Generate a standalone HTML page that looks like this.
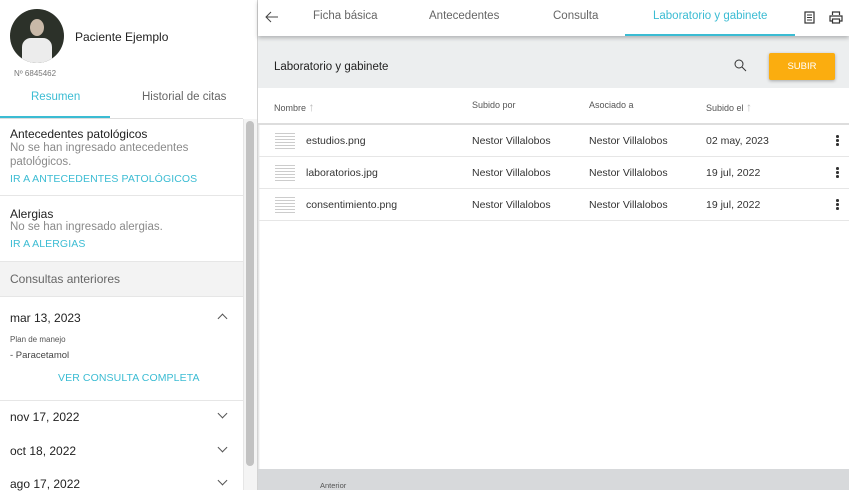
<!DOCTYPE html>
<html><head><meta charset="utf-8"><style>
*{box-sizing:border-box;margin:0;padding:0}
body{width:849px;height:490px;overflow:hidden;font-family:"Liberation Sans",sans-serif;background:#fff;position:relative;color:#333}
.abs{position:absolute}
.left{left:0;top:0;width:243px;height:490px;background:#fff}
.cyan{color:#3bbcd3}
.sec{position:absolute;left:0;width:243px;border-bottom:1px solid #e6e6e6}
.t{font-size:12px;color:#222}
.g{font-size:11.5px;color:#8a8a8a;line-height:14px}
.lk{font-size:10.5px;color:#3bbcd3;letter-spacing:.1px}
.date{position:absolute;left:10px;font-size:12px;color:#222}
.chev{position:absolute;left:219px;width:7px;height:7px;border-right:1px solid #555;border-bottom:1px solid #555}
.th{font-size:9px;color:#555;position:absolute;top:100px}
.row{position:absolute;left:258px;width:591px;height:32px;border-bottom:1px solid #e6e6e6;font-size:10.5px;color:#333}
.row span{position:absolute;top:10px}
.dots{position:absolute;left:578px;top:10px;width:3px}
.dots i{display:block;width:2.5px;height:2.5px;background:#333;border-radius:50%;margin-bottom:1.5px}
.thumb{position:absolute;left:17px;top:6px;width:20px;height:20px;background:repeating-linear-gradient(#fff 0 2px,#ccc 2px 3px)}
</style></head><body>
<div class="abs left">
  <div class="abs" style="left:10px;top:9px;width:54px;height:54px;border-radius:50%;background:#2c3129;overflow:hidden">
    <div class="abs" style="left:20px;top:10px;width:14px;height:17px;border-radius:50%;background:#c9b9a8"></div>
    <div class="abs" style="left:12px;top:29px;width:30px;height:26px;background:#ececec;border-radius:9px 9px 0 0"></div>
  </div>
  <div class="abs" style="left:75px;top:30px;font-size:12px;color:#222">Paciente Ejemplo</div>
  <div class="abs" style="left:14px;top:69px;font-size:8px;color:#777">Nº 6845462</div>
  <div class="abs cyan" style="left:31px;top:91px;font-size:11.5px">Resumen</div>
  <div class="abs" style="left:142px;top:91px;font-size:11.5px;color:#666">Historial de citas</div>
  <div class="abs" style="left:0;top:116px;width:110px;height:2px;background:#3bbcd3"></div>
  <div class="abs" style="left:0;top:118px;width:243px;height:1px;background:#ddd"></div>
  <div class="sec" style="top:119px;height:77px">
    <div class="abs t" style="left:10px;top:8px">Antecedentes patológicos</div>
    <div class="abs g" style="left:10px;top:22px;width:220px">No se han ingresado antecedentes patológicos.</div>
    <div class="abs lk" style="left:10px;top:54px">IR A ANTECEDENTES PATOLÓGICOS</div>
  </div>
  <div class="sec" style="top:196px;height:66px">
    <div class="abs t" style="left:10px;top:11px">Alergias</div>
    <div class="abs g" style="left:10px;top:24px">No se han ingresado alergias.</div>
    <div class="abs lk" style="left:10px;top:42px">IR A ALERGIAS</div>
  </div>
  <div class="sec" style="top:262px;height:35px;background:#f3f3f3">
    <div class="abs" style="left:10px;top:10px;font-size:12px;color:#666">Consultas anteriores</div>
  </div>
  <div class="sec" style="top:297px;height:104px">
    <div class="date" style="top:14px">mar 13, 2023</div>
    <div class="chev" style="top:18px;transform:rotate(-135deg)"></div>
    <div class="abs" style="left:10px;top:38px;font-size:8px;color:#555">Plan de manejo</div>
    <div class="abs" style="left:10px;top:53px;font-size:9.5px;color:#444">- Paracetamol</div>
    <div class="abs lk" style="left:58px;top:75px">VER CONSULTA COMPLETA</div>
  </div>
  <div class="date" style="top:410px">nov 17, 2022</div><div class="chev" style="top:410px;transform:rotate(45deg)"></div>
  <div class="date" style="top:444px">oct 18, 2022</div><div class="chev" style="top:444px;transform:rotate(45deg)"></div>
  <div class="date" style="top:477px">ago 17, 2022</div><div class="chev" style="top:477px;transform:rotate(45deg)"></div>
</div>
<div class="abs" style="left:243px;top:119px;width:15px;height:371px;background:#f4f4f4;border-left:1px solid #e6e6e6"></div>
<div class="abs" style="left:246px;top:121px;width:8px;height:345px;background:#c2c2c2;border-radius:4px"></div>
<div class="abs" style="left:257px;top:0;width:3px;height:490px;background:linear-gradient(90deg,#ccc,#fff0)"></div>
<div class="abs" style="left:258px;top:0;width:591px;height:36px;background:#fff;box-shadow:0 2px 4px rgba(0,0,0,.25);z-index:2">
  <svg class="abs" style="left:7px;top:11px" width="14" height="12" viewBox="0 0 14 12"><path d="M13 6H1M6 1L1 6l5 5" stroke="#444" stroke-width="1" fill="none"/></svg>
  <div class="abs" style="left:55px;top:10px;font-size:11.5px;color:#666">Ficha básica</div>
  <div class="abs" style="left:171px;top:10px;font-size:11.5px;color:#666">Antecedentes</div>
  <div class="abs" style="left:295px;top:10px;font-size:11.5px;color:#666">Consulta</div>
  <div class="abs cyan" style="left:395px;top:10px;font-size:11.5px">Laboratorio y gabinete</div>
  <div class="abs" style="left:367px;top:34px;width:170px;height:2px;background:#3bbcd3"></div>
  <svg class="abs" style="left:546px;top:11px" width="11" height="13" viewBox="0 0 11 13"><rect x="1" y="1" width="9" height="11" fill="none" stroke="#333" stroke-width="1.2"/><path d="M3 4h5M3 6.5h5M3 9h5" stroke="#333"/></svg>
  <svg class="abs" style="left:571px;top:11px" width="14" height="13" viewBox="0 0 14 13"><path d="M3.5 4V1h7v3M3.5 10H1V5h12v5h-2.5" fill="none" stroke="#333" stroke-width="1.2"/><rect x="3.5" y="8" width="7" height="4" fill="none" stroke="#333" stroke-width="1.2"/></svg>
</div>
<div class="abs" style="left:258px;top:36px;width:591px;height:52px;background:#eceeef"></div>
<div class="abs" style="left:274px;top:61px;font-size:11.5px;color:#222">Laboratorio y gabinete</div>
<svg class="abs" style="left:734px;top:59px" width="13" height="13" viewBox="0 0 13 13"><circle cx="5" cy="5" r="4" fill="none" stroke="#333" stroke-width="1"/><path d="M8 8l4 4" stroke="#333" stroke-width="1"/></svg>
<div class="abs" style="left:769px;top:53px;width:66px;height:27px;background:#fbad0f;border-radius:2px;box-shadow:0 1px 3px rgba(0,0,0,.3);color:#fff;font-size:9.5px;text-align:center;line-height:27px">SUBIR</div>
<div class="abs" style="left:258px;top:88px;width:591px;height:37px;background:#fff;border-bottom:2px solid #ddd"></div>
<div class="th" style="left:274px">Nombre <span style="color:#bbb;font-size:12px">↑</span></div>
<div class="th" style="left:472px">Subido por</div>
<div class="th" style="left:589px">Asociado a</div>
<div class="th" style="left:706px">Subido el <span style="color:#bbb;font-size:12px">↑</span></div>
<div class="row" style="top:125px"><div class="thumb"></div><span style="left:48px">estudios.png</span><span style="left:214px">Nestor Villalobos</span><span style="left:331px">Nestor Villalobos</span><span style="left:448px">02 may, 2023</span><div class="dots"><i></i><i></i><i></i></div></div>
<div class="row" style="top:157px"><div class="thumb"></div><span style="left:48px">laboratorios.jpg</span><span style="left:214px">Nestor Villalobos</span><span style="left:331px">Nestor Villalobos</span><span style="left:448px">19 jul, 2022</span><div class="dots"><i></i><i></i><i></i></div></div>
<div class="row" style="top:189px"><div class="thumb"></div><span style="left:48px">consentimiento.png</span><span style="left:214px">Nestor Villalobos</span><span style="left:331px">Nestor Villalobos</span><span style="left:448px">19 jul, 2022</span><div class="dots"><i></i><i></i><i></i></div></div>
<div class="abs" style="left:258px;top:469px;width:591px;height:21px;background:#d7d9db"></div>
<div class="abs" style="left:320px;top:481px;font-size:7.5px;color:#555">Anterior</div>
</body></html>
